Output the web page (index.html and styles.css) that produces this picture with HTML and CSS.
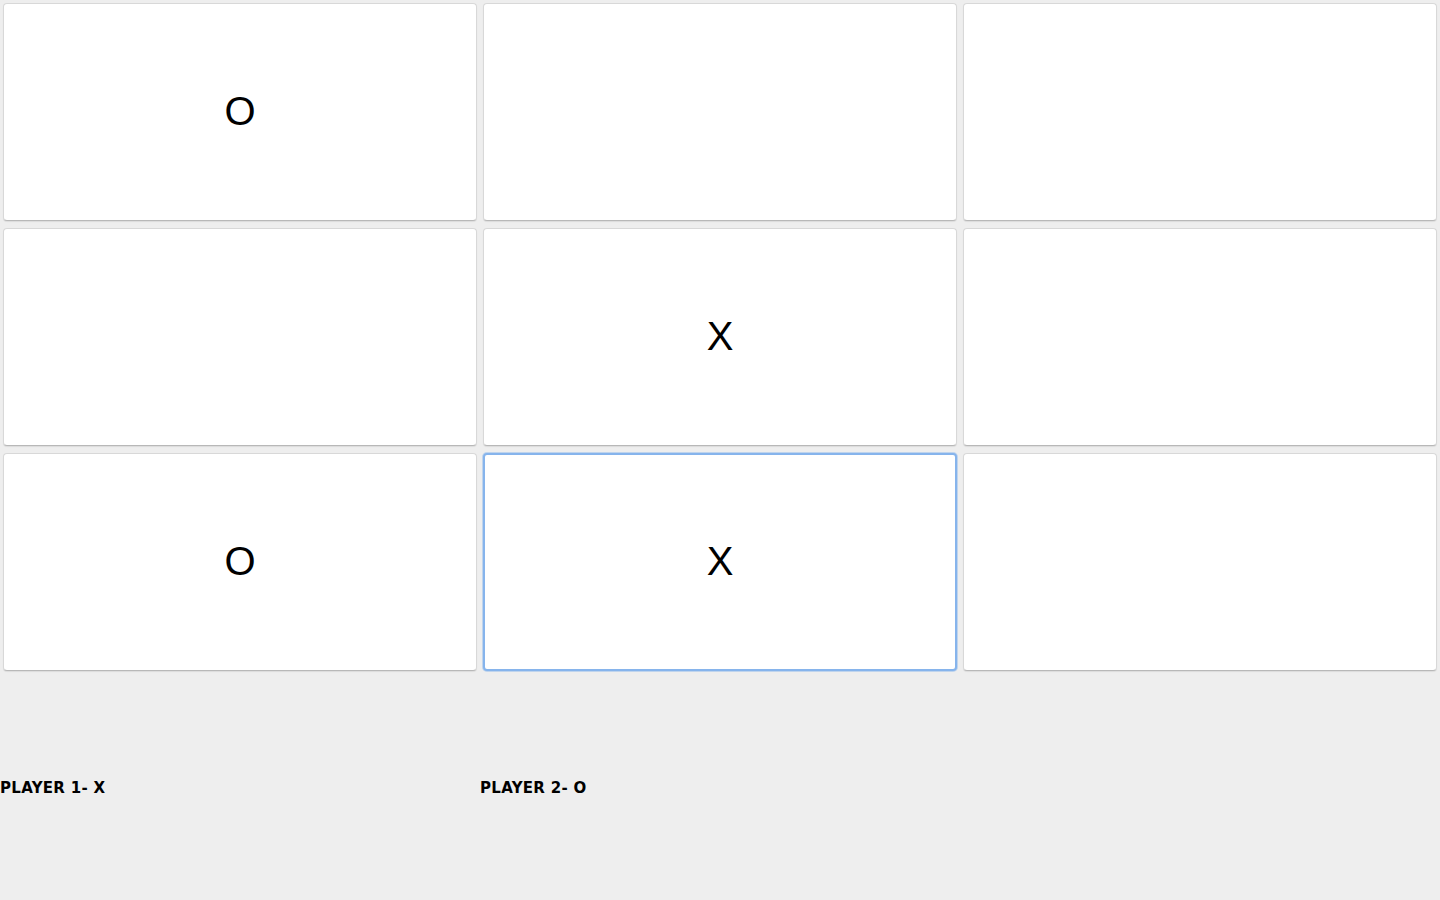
FILE: index.html
```html
<!DOCTYPE html>
<html>
<head>
<meta charset="utf-8">
<link rel="stylesheet" href="styles.css">
</head>
<body>
<div class="board">
  <button class="cell">O</button>
  <button class="cell"></button>
  <button class="cell"></button>
  <button class="cell"></button>
  <button class="cell">X</button>
  <button class="cell"></button>
  <button class="cell">O</button>
  <button class="cell focused">X</button>
  <button class="cell"></button>
</div>
<div class="players">
  <h4 class="player">PLAYER 1- X</h4>
  <h4 class="player">PLAYER 2- O</h4>
</div>
</body>
</html>
```
FILE: styles.css
```css
html, body {
  margin: 0;
  padding: 0;
  background: #eeeeee;
  width: 1440px;
  height: 900px;
  overflow: hidden;
}
.board {
  display: grid;
  grid-template-columns: repeat(3, 474px);
  grid-template-rows: repeat(3, 218px);
  column-gap: 6px;
  row-gap: 7px;
  padding: 3px 0 0 3px;
}
.cell {
  margin: 0;
  padding: 0 0 2px 0;
  background: #ffffff;
  border: 1px solid #d8d8d8;
  border-bottom-color: #b8b8b8;
  border-radius: 4px;
  box-shadow: 0 1px 1px rgba(0,0,0,0.08);
  font-family: "Liberation Sans", Arial, sans-serif;
  font-size: 40px;
  color: #000;
  cursor: pointer;
}
.cell.focused {
  border: 2px solid #86b4ec;
  box-shadow: 0 0 0 1px rgba(134,180,236,0.45);
  outline: none;
}
.players {
  display: grid;
  grid-template-columns: 480px 480px;
  margin-top: 109px;
}
.player {
  margin: 0;
  font-family: "DejaVu Sans", Verdana, sans-serif;
  font-weight: bold;
  font-size: 15px;
  letter-spacing: 0.3px;
  line-height: 17px;
  color: #000;
}
```
